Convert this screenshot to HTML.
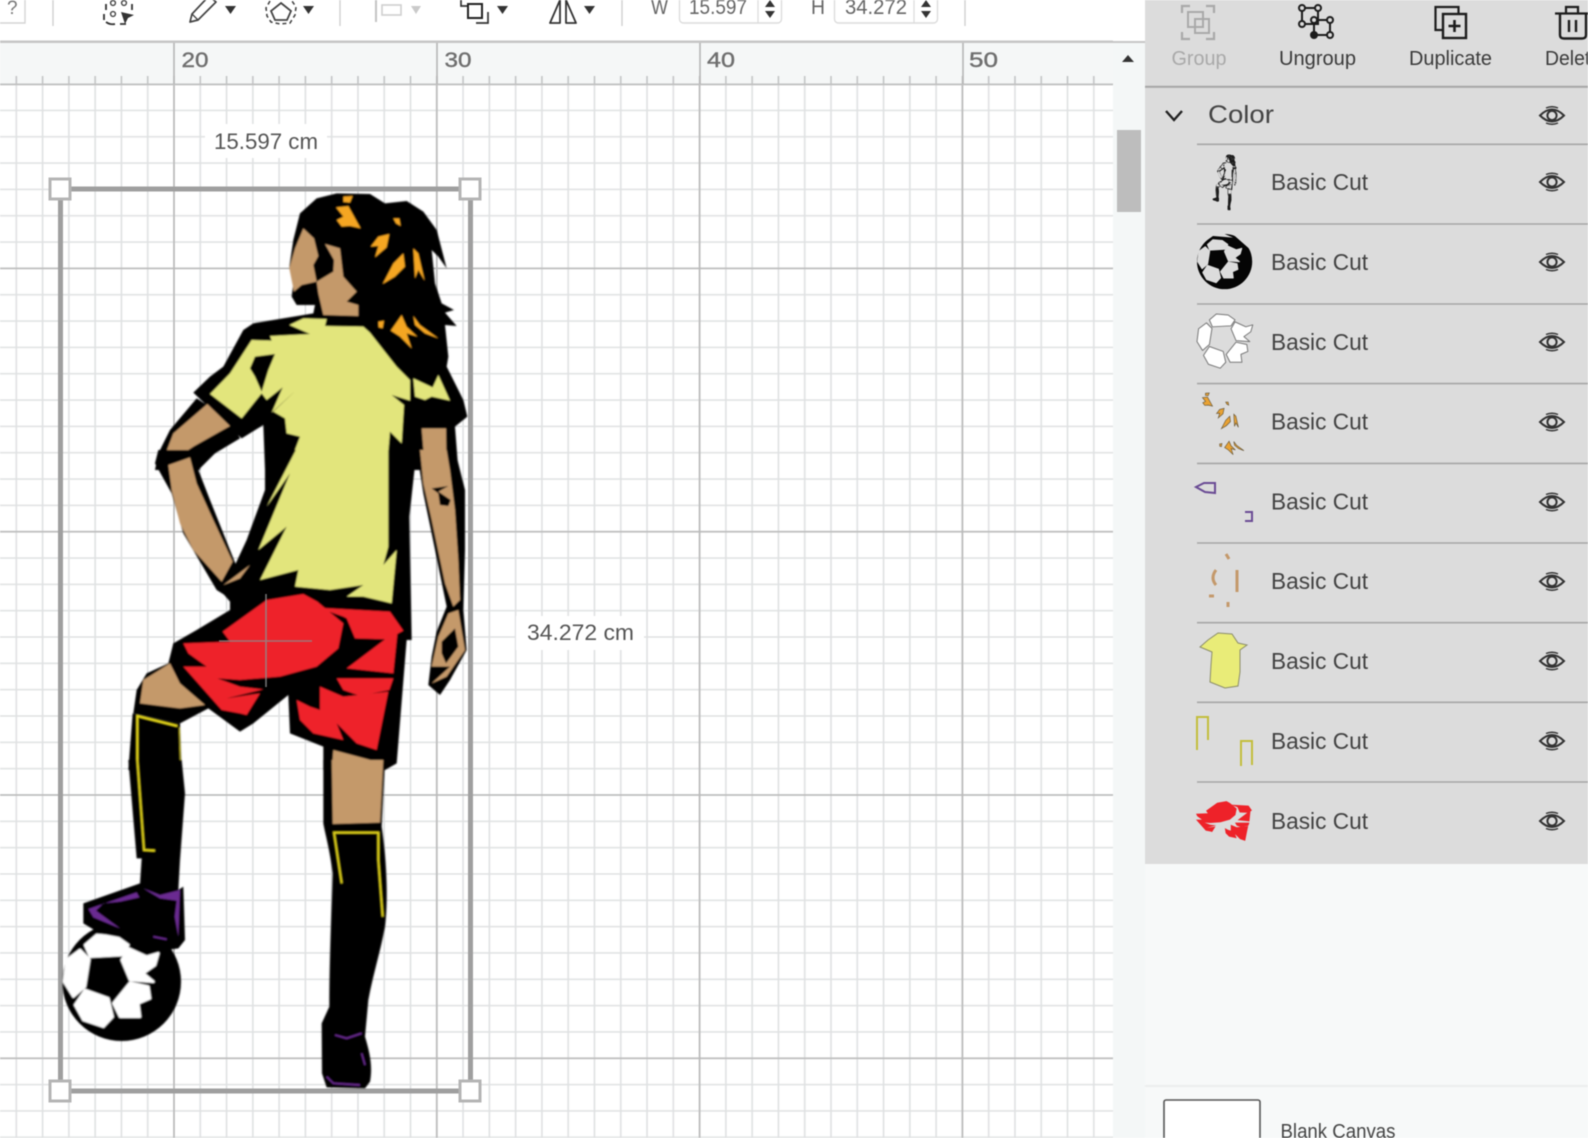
<!DOCTYPE html>
<html lang="en"><head><meta charset="utf-8"><title>Canvas</title>
<style>
html,body{margin:0;padding:0;background:#fff;width:1588px;height:1138px;overflow:hidden}
svg{display:block;filter:blur(.45px)}
text{font-family:"Liberation Sans",Arial,sans-serif}
.k{fill:var(--k,#050505)}.sk{fill:var(--sk,#c4996b)}.sh{fill:var(--sh,#e2e57c)}.r{fill:var(--r,#ee2229)}
.o{fill:var(--o,#f5a623)}
.bc{font-size:23px;fill:#424242}
.lb{font-size:20px;fill:#3a3a3a}
</style></head><body>
<svg width="1588" height="1138" viewBox="0 0 1588 1138" xmlns="http://www.w3.org/2000/svg">
<defs>
<filter id="soft" x="-5%" y="-5%" width="110%" height="110%"><feGaussianBlur stdDeviation=".7"/></filter>
<pattern id="mn" patternUnits="userSpaceOnUse" x="173" y="267.4" width="26.28" height="26.33"><path d="M1 0V27M0 1H27" stroke="#dfe1e2" stroke-width="1.6" fill="none"/></pattern>
<pattern id="mj" patternUnits="userSpaceOnUse" x="173" y="267.4" width="262.8" height="263.3"><path d="M1 0V264M0 1H263" stroke="#b9b9b9" stroke-width="1.6" fill="none"/></pattern>
<pattern id="tk" patternUnits="userSpaceOnUse" x="173" y="76" width="26.28" height="9"><path d="M1 0V9" stroke="#bfc1c2" stroke-width="1.5"/></pattern>
<g id="eye" fill="none" stroke="#333"><path d="M-12 0Q0-12 12 0Q0 12-12 0Z" stroke-width="2"/><circle r="4.6" stroke-width="2"/><path d="M-6-7.500Q0-10 6-7.500M-6 7.500Q0 10 6 7.500" stroke-width="1.4"/></g>
<g id="patches" stroke-linejoin="round">
<path d="M135,555L170,525 230,530 265,555 245,585 150,590Z"/>
<path d="M120,570L148,598 135,680 100,710 72,665 80,600Z"/>
<path d="M265,565L320,590 355,580 345,615 310,640 340,665 270,660 245,600Z"/>
<path d="M270,668L325,680 330,715 295,730 300,770 240,770 220,730Z"/>
<path d="M135,690L205,715 218,770 190,800 130,780 105,735Z"/>
</g>
<g id="shorts" class="r">
<path d="M278,545L410,450 520,432 562,455 640,520 625,595 560,650 450,680 330,690 262,685 330,710 400,718 290,745 390,730 350,795 330,790 275,780 160,650 230,650 175,610 160,580 300,575Z"/>
<path d="M562,473L780,485 820,542 802,552 790,670 650,655 765,568 675,565 650,505 640,500Z"/>
<path d="M620,685L790,685 778,720 690,738 640,720Z"/>
<path d="M500,750L540,770 570,780 570,710 640,740 775,725 740,900 680,880 620,820 640,870 550,850 510,810Z"/>
</g>
<g id="hl" class="o">
<path d="M640,80L668,78 660,98 640,96Z"/>
<path d="M618,112L655,108 692,175 660,168 635,170 620,150 640,140Z"/>
<path d="M722,230L745,200 778,192 770,232 735,262 745,228Z"/>
<path d="M790,145L808,145 812,168 798,160Z"/>
<path d="M758,342L790,280 820,250 825,290 795,320Z"/>
<path d="M850,235L865,250 884,332 865,300 855,325Z"/>
<path d="M782,482L815,435 830,470 862,500 830,490 845,535 810,500Z"/>
<path d="M850,438L870,465 925,505 885,490 855,465Z"/>
<path d="M745,455L762,452 758,475 746,472Z"/>
</g>
<g id="fig">
<g transform="translate(130,170) scale(.33333)">
<path class="k" d="M510,130L560,85 620,70 720,72 765,100 830,93 880,125 920,180 950,295 925,260 905,240 915,340 935,400 972,420 945,428 980,468 945,465 955,560 950,590 1000,690 1012,740 975,770 985,900 860,900 405,900 400,765 335,805 190,668 240,620 280,590 340,480 370,460 550,430 555,405 500,405 485,380 490,340 478,290 490,210Z"/>
<path class="k" d="M200,685L120,780 85,850 75,900 210,900 205,880 330,805 300,750Z"/>
<path class="sk" d="M520,175L552,205 565,258 550,285 560,335 515,345 492,365 478,295 495,235Z"/>
<path class="sk" d="M585,222L630,235 640,320 680,365 650,395 685,405 685,438 580,435 565,370 560,335 610,305 612,270Z"/>
<path class="sk" d="M105,855L130,790 232,702 300,768 190,830 115,880Z"/>
<path class="sk" d="M112,888L185,865 190,900 125,905Z"/>
<path class="sk" d="M875,775L948,775 950,900 885,900Z"/>
<path class="sh" d="M240,672L300,610 365,510 425,512 420,498 540,492 478,465 520,445 590,447 585,468 700,470 720,488 800,590 840,630 840,692 785,675 822,705 815,820 780,785 770,905 470,905 510,800 470,790 465,745 430,725 497,662 425,728 458,652 410,690 395,670 335,745Z"/>
<path class="k" d="M360,595L375,560 435,552 415,600 395,665 375,620Z"/>
<path class="sh" d="M850,625L908,652 925,615 960,692 905,680 885,690 855,680Z"/>
<use href="#hl"/>
</g>
<g transform="translate(130,450) scale(.33333)">
<path class="k" d="M405,0L405,120 350,270 315,345 270,420 300,455 300,480 200,540 130,580 115,640 50,670 20,720 10,790 150,820 235,775 330,845 370,820 475,735 480,850 580,890 580,960 765,960 800,940 830,570 845,570 838,200 860,0Z"/>
<path class="k" d="M8,790L150,820 155,960-5,960Z"/>
<path class="k" d="M85,0L75,40 125,130 160,250 260,420 300,445 320,350 240,150 205,60 265,0Z"/>
<path class="k" d="M860,0L975,0 1005,120 1005,300 1000,480 1010,600 960,690 930,735 895,705 905,620 920,545 950,470 905,250 880,130Z"/>
<path class="sk" d="M115,45L180,22 200,100 250,210 308,335 275,395 190,300 150,220 125,120Z"/>
<path class="sk" d="M280,405L360,345 330,385Z"/>
<path class="sk" d="M870,0L950,0 960,60 975,180 985,330 990,450 970,470 945,400 905,210 880,100Z"/>
<path class="k" d="M905,115L955,108 925,125 962,150 955,168 930,165 925,130Z"/>
<path class="sk" d="M955,490L985,480 1005,600 950,680 905,700 960,650 905,650 925,560Z"/>
<path class="k" d="M935,575L975,535 985,590 948,640 935,610Z"/>
<path class="sh" d="M500,-5L775,-5 775,290 760,345 800,300 785,460 700,440 650,440 700,405 600,420 495,410 505,360 390,390 470,230 385,300 480,70 410,170Z"/>
<use href="#shorts"/>
<path class="sk" d="M30,760L40,690 120,640 150,700 225,765 150,775Z"/>
<path class="sk" d="M610,900L760,940 760,965 605,965Z"/>
<path d="M22,965L22,798 142,828" fill="none" stroke="var(--y,#efe01f)" stroke-width="6"/>
<path d="M148,832L152,960" fill="none" stroke="var(--y,#b8ad1c)" stroke-width="3"/>
</g>
<g transform="translate(40,760) scale(.33333)">
<circle cx="245" cy="665" r="178" fill="var(--b,#050505)"/>
<g fill="var(--w,#fff)" stroke="var(--w,#fff)" stroke-width="8"><use href="#patches"/></g>
<path class="k" d="M265,0L425,0 435,100 420,300 415,390 430,380 435,540 415,565 340,575 320,565 260,535 180,520 130,490 130,430 300,370 305,295 290,295Z"/>
<path d="M292,0L312,270 345,272" fill="none" stroke="var(--y,#e6d81c)" stroke-width="6"/>
<path d="M145,447L290,397 298,412 240,425 190,430 168,452 240,505 160,472Z" fill="var(--p,#6a2c91)"/>
<path d="M310,385L360,405 420,390 415,530 404,470 410,422 360,415Z" fill="var(--p,#6a2c91)"/>
<path d="M340,530L380,538" stroke="var(--p,#6a2c91)" stroke-width="5" fill="none"/>
<path class="k" d="M850,0L1035,0 1025,200C1040,300 1045,420 1035,500C1020,580 1000,640 985,720L975,830C990,880 998,920 990,965L975,985 860,982 846,940 845,790 868,740C868,600 875,450 878,340C870,270 855,220 850,190Z"/>
<path class="sk" d="M875,0L1030,0 1020,188 878,192Z"/>
<path d="M905,370L882,218 1015,218 1015,300 1028,470" fill="none" stroke="var(--y,#e6d81c)" stroke-width="6"/>
<path d="M885,825L920,835 965,820M965,880L975,915M860,950L880,970 960,975" fill="none" stroke="var(--p,#6a2c91)" stroke-width="5"/>
</g>
</g>
</defs>

<rect width="1588" height="1138" fill="#fff"/>
<!-- canvas grid -->
<rect x="0" y="84" width="1113" height="1054" fill="url(#mn)"/>
<rect x="0" y="84" width="1113" height="1054" fill="url(#mj)"/>
<!-- ruler -->
<rect x="0" y="43" width="1113" height="41" fill="#f5f7f7"/>
<rect x="0" y="76" width="1113" height="9" fill="url(#tk)"/>
<rect x="0" y="40.500" width="1145" height="2.500" fill="#c6c6c6"/>
<rect x="0" y="83.500" width="1113" height="1.800" fill="#c0c0c0"/>
<path d="M174 43V84M437 43V84M700 43V84M963 43V84" stroke="#b5b5b5" stroke-width="1.6"/>
<g font-size="21" fill="#6f6f6f" stroke="#6f6f6f" stroke-width=".4">
<text x="181.500" y="67" textLength="27" lengthAdjust="spacingAndGlyphs">20</text>
<text x="444.500" y="67" textLength="27" lengthAdjust="spacingAndGlyphs">30</text>
<text x="707" y="67" textLength="28" lengthAdjust="spacingAndGlyphs">40</text>
<text x="969" y="67" textLength="29" lengthAdjust="spacingAndGlyphs">50</text>
</g>
<!-- scrollbar col -->
<rect x="1113" y="43" width="32" height="1095" fill="#f4f7f7"/>
<rect x="1113" y="0" width="32" height="41" fill="#fff"/>
<path d="M1122 62L1128 55 1134 62Z" fill="#333"/>
<rect x="1117" y="130" width="24" height="82" fill="#bdbdbd"/>

<!-- selection -->
<rect x="60.500" y="189" width="410" height="902" fill="none" stroke="#9f9f9f" stroke-width="5"/>
<use href="#fig" filter="url(#soft)"/>
<g fill="#fff" stroke="#b4b4b4" stroke-width="3">
<rect x="50" y="179" width="20" height="20"/><rect x="460" y="179" width="20" height="20"/>
<rect x="50" y="1081" width="20" height="20"/><rect x="460" y="1081" width="20" height="20"/>
</g>
<path d="M266 594V687M219 641H312" stroke="#8d8d8d" stroke-width="1.6" opacity=".8"/>
<rect x="205" y="124" width="122" height="34" fill="#fff"/>
<rect x="516" y="616" width="128" height="34" fill="#fff"/>
<text x="214" y="149" font-size="22" fill="#555" textLength="104" lengthAdjust="spacingAndGlyphs">15.597 cm</text>
<text x="527" y="640" font-size="22" fill="#555" textLength="107" lengthAdjust="spacingAndGlyphs">34.272 cm</text>

<!-- top toolbar -->
<g fill="none">
<path d="M-2 23H25V-2" stroke="#d4d4d4" stroke-width="1.4"/>
<path d="M53 0V26M340 0V26M622 0V26M965 0V26" stroke="#d0d0d0" stroke-width="1.4"/>
<path d="M106 4V10M104 14V20M106 22Q110 25 115 24M120 24H126" stroke="#333" stroke-width="1.8"/>
<path d="M132 4V10" stroke="#333" stroke-width="1.8"/>
<circle cx="113" cy="3" r="2.400" stroke="#444" stroke-width="1.4"/><circle cx="124" cy="3" r="2.400" stroke="#444" stroke-width="1.4"/><circle cx="113" cy="14" r="2.400" stroke="#444" stroke-width="1.4"/>
<path d="M121 12L134 15 128 18 125 24Z" fill="#333"/>
<path d="M190 22L192 14 209-4 216 2 198 20Z" stroke="#444" stroke-width="1.7" stroke-linejoin="round"/><path d="M192 14L198 20" stroke="#444" stroke-width="1.3"/>
<path d="M225 6H236L230.500 14Z" fill="#333"/>
<path d="M281 3L291 11 287 20H275L271 11Z" stroke="#444" stroke-width="1.8"/>
<path d="M270 1L266 8 267 16 271 22 280 24 290 23 295 15 296 7 292 1" stroke="#444" stroke-width="1.6" stroke-dasharray="4 3"/>
<path d="M303 6H314L308.500 14Z" fill="#333"/>
<path d="M376 0V22" stroke="#c4c4c4" stroke-width="2"/>
<rect x="382" y="5" width="19" height="10" stroke="#cfcfcf" stroke-width="1.6"/>
<path d="M411 6H421L416 14Z" fill="#cacaca"/>
<path d="M461 0V6H467" stroke="#333" stroke-width="1.7"/>
<rect x="468" y="4" width="14" height="14" stroke="#222" stroke-width="2"/>
<path d="M476 23H488V12" stroke="#333" stroke-width="1.7"/>
<path d="M497 6H508L502.500 14Z" fill="#333"/>
<path d="M560 0L550 23H560ZM566 0L576 23H566Z" stroke="#333" stroke-width="1.8" stroke-linejoin="round"/>
<path d="M584 6H595L589.500 14Z" fill="#333"/>
<rect x="679.500" y="-6" width="102" height="29" rx="4" fill="#fff" stroke="#dcdcdc" stroke-width="1.4"/>
<rect x="834.500" y="-6" width="103" height="29" rx="4" fill="#fff" stroke="#dcdcdc" stroke-width="1.4"/>
<path d="M758 0V23M914 0V23" stroke="#dcdcdc" stroke-width="1.2"/>
<path d="M765 7L770 0 775 7ZM765 11H775L770 18ZM921 7L926 0 931 7ZM921 11H931L926 18Z" fill="#333"/>
</g>
<g font-size="21" fill="#666">
<text x="651" y="14" textLength="17" lengthAdjust="spacingAndGlyphs">W</text>
<text x="811" y="14" textLength="14" lengthAdjust="spacingAndGlyphs">H</text>
<text x="689" y="14" textLength="58" lengthAdjust="spacingAndGlyphs">15.597</text>
<text x="845" y="14" textLength="62" lengthAdjust="spacingAndGlyphs">34.272</text>
<text x="7" y="14" font-size="19" fill="#777">?</text>
</g>

<!-- right panel -->
<rect x="1145" y="0" width="443" height="864" fill="#dcdcdc"/>
<rect x="1145" y="864" width="443" height="274" fill="#f7f9f9"/>
<rect x="1145" y="1085" width="443" height="2" fill="#eceeee"/>
<rect x="1164" y="1100" width="96" height="60" rx="2" fill="#fff" stroke="#555" stroke-width="1.6"/>
<text x="1280.500" y="1138" font-size="20" fill="#444" textLength="115" lengthAdjust="spacingAndGlyphs">Blank Canvas</text>

<!-- panel top icons -->
<g fill="none">
<path d="M1182 13V6H1190M1206 6H1214V13M1214 32V39H1206M1190 39H1182V32" stroke="#a9a9a9" stroke-width="2.200"/>
<rect x="1188" y="12" width="15" height="15" stroke="#a9a9a9" stroke-width="2"/>
<rect x="1195" y="19" width="14" height="14" stroke="#a9a9a9" stroke-width="2"/>
<g stroke="#1c1c1c" stroke-width="2">
<rect x="1302" y="8" width="16" height="16"/>
<rect x="1314" y="20" width="16" height="15"/>
<circle cx="1302" cy="8" r="3" fill="#dcdcdc"/><circle cx="1318" cy="8" r="3" fill="#dcdcdc"/><circle cx="1302" cy="24" r="3" fill="#dcdcdc"/>
<circle cx="1314" cy="20" r="3" fill="#dcdcdc"/><circle cx="1330" cy="20" r="3" fill="#dcdcdc"/><circle cx="1330" cy="35" r="3" fill="#dcdcdc"/>
<circle cx="1314" cy="35" r="3" fill="#1c1c1c"/>
</g>
<rect x="1435.500" y="7" width="23" height="23" stroke="#1c1c1c" stroke-width="2.200"/>
<rect x="1443" y="14" width="23" height="24" fill="#dcdcdc" stroke="#1c1c1c" stroke-width="2.400"/>
<path d="M1454.500 20V32M1448.500 26H1460.500" stroke="#1c1c1c" stroke-width="2.600"/>
<path d="M1555 13.500H1590M1566 13V7H1578V13" stroke="#1c1c1c" stroke-width="2.200"/>
<path d="M1560 14V35Q1560 38.500 1564 38.500H1582Q1586 38.500 1586 35V14" stroke="#1c1c1c" stroke-width="2.400"/>
<path d="M1569 20V32M1576 20V32" stroke="#1c1c1c" stroke-width="2.400"/>
</g>
<g class="lb">
<text x="1171.500" y="65" fill="#a9a9a9" font-size="20" textLength="55" lengthAdjust="spacingAndGlyphs">Group</text>
<text x="1279" y="65" font-size="20" fill="#3a3a3a" textLength="77" lengthAdjust="spacingAndGlyphs">Ungroup</text>
<text x="1409" y="65" font-size="20" fill="#3a3a3a" textLength="83" lengthAdjust="spacingAndGlyphs">Duplicate</text>
<text x="1545" y="65" font-size="20" fill="#3a3a3a" textLength="56" lengthAdjust="spacingAndGlyphs">Delete</text>
</g>
<rect x="1145" y="85.800" width="443" height="2" fill="#a6a6a6"/>
<path d="M1166 111L1174 120 1182 111" fill="none" stroke="#222" stroke-width="2.400"/>
<text x="1208" y="123" font-size="25" fill="#444" textLength="66" lengthAdjust="spacingAndGlyphs">Color</text>

<!-- row separators -->
<path d="M1197 144.300H1588M1197 224H1588M1197 304H1588M1197 383.600H1588M1197 463.400H1588M1197 543H1588M1197 622.700H1588M1197 702.300H1588M1197 782H1588" stroke="#a6a6a6" stroke-width="1.600"/>

<!-- eyes -->
<use href="#eye" x="1552" y="115.500"/>
<use href="#eye" x="1552" y="182"/>
<use href="#eye" x="1552" y="262"/>
<use href="#eye" x="1552" y="342"/>
<use href="#eye" x="1552" y="422"/>
<use href="#eye" x="1552" y="502"/>
<use href="#eye" x="1552" y="581.500"/>
<use href="#eye" x="1552" y="661"/>
<use href="#eye" x="1552" y="741"/>
<use href="#eye" x="1552" y="821"/>

<!-- Basic Cut labels -->
<g class="bc">
<text class="bc" x="1271" y="190" textLength="97" lengthAdjust="spacingAndGlyphs">Basic Cut</text>
<text class="bc" x="1271" y="270" textLength="97" lengthAdjust="spacingAndGlyphs">Basic Cut</text>
<text class="bc" x="1271" y="350" textLength="97" lengthAdjust="spacingAndGlyphs">Basic Cut</text>
<text class="bc" x="1271" y="429.500" textLength="97" lengthAdjust="spacingAndGlyphs">Basic Cut</text>
<text class="bc" x="1271" y="509.500" textLength="97" lengthAdjust="spacingAndGlyphs">Basic Cut</text>
<text class="bc" x="1271" y="589" textLength="97" lengthAdjust="spacingAndGlyphs">Basic Cut</text>
<text class="bc" x="1271" y="669" textLength="97" lengthAdjust="spacingAndGlyphs">Basic Cut</text>
<text class="bc" x="1271" y="749" textLength="97" lengthAdjust="spacingAndGlyphs">Basic Cut</text>
<text class="bc" x="1271" y="829" textLength="97" lengthAdjust="spacingAndGlyphs">Basic Cut</text>
</g>

<!-- thumbnails -->
<g transform="translate(1207.500,142.500) scale(.0622)" style="--sk:#dcdcdc;--sh:#dcdcdc;--r:#dcdcdc;--o:#555;--y:#dcdcdc;--p:#111;--w:#dcdcdc;--b:#dcdcdc;--k:#1c1c1c"><use href="#fig"/></g>
<g transform="translate(1197,234) scale(.155) translate(-67,-487)"><path d="M245,487A178,178 0 1 1 67,665A178,178 0 0 1 135,525L170,500 300,510Z" fill="#050505"/><path d="M300,490L425,600 440,480Z" fill="#dcdcdc"/><g fill="#dcdcdc" stroke="#dcdcdc" stroke-width="8"><use href="#patches"/></g></g>
<g transform="translate(1197,314) scale(.197) translate(-72,-525)" fill="#fff" stroke="#777" stroke-width="5"><use href="#patches"/></g>
<g transform="translate(1202.500,393) scale(.135) translate(-618,-78)" stroke="#6b5a3a" stroke-width="5" style="--o:#e9a233"><use href="#hl"/></g>
<path d="M1196 487L1204 483H1215V493L1205 492Z M1245 512H1252V521H1245" fill="none" stroke="#6a4b94" stroke-width="2"/>
<path d="M1226 554L1229 559M1216 570Q1210 578 1216 585M1237 570V592M1209 596H1214M1228 602V607" fill="none" stroke="#c4996b" stroke-width="3"/>
<path d="M1200 647L1208 640 1218 633 1232 634 1238 643 1247 645 1240 650 1240 672 1238 686 1225 688 1210 682 1211 665 1212 652Z" fill="#e9ec78" stroke="#8b8d6a" stroke-width="1"/>
<path d="M1197 750V717H1208V740M1241 766V741H1252V765" fill="none" stroke="#c3bd3c" stroke-width="2"/>
<g transform="translate(1196,801) scale(.0848) translate(-160,-430)"><use href="#shorts"/></g>
</svg>
</body></html>
